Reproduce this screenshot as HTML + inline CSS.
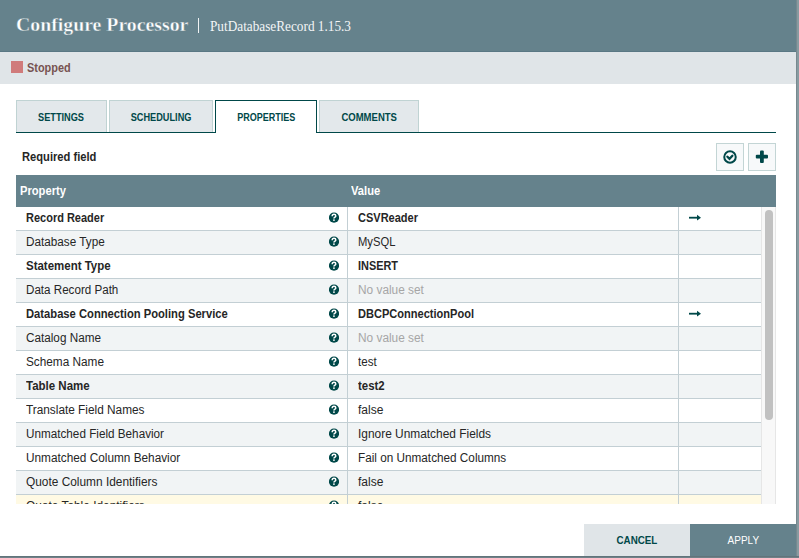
<!DOCTYPE html>
<html><head><meta charset="utf-8">
<style>
*{box-sizing:border-box;margin:0;padding:0}
html,body{width:799px;height:558px;overflow:hidden;background:#889ba1;font-family:"Liberation Sans",sans-serif}
#dlg{position:absolute;left:0;top:0;width:796px;height:556px;background:#fff;overflow:hidden}
#hdr{position:absolute;left:0;top:0;width:796px;height:52px;background:#65828c;border-bottom:1px solid #5a7884}
#ttl{-webkit-text-stroke:0.4px #65828c;position:absolute;left:16px;top:12px;font-family:"Liberation Serif",serif;font-weight:bold;font-size:19.8px;color:#fff;white-space:nowrap;line-height:24px}
#sep{position:absolute;left:198px;top:18px;width:1px;height:15px;background:#f0f3f4}
#sub{position:absolute;left:209.5px;top:19px;font-family:"Liberation Serif",serif;font-size:13.6px;color:#f3f5f6;white-space:nowrap;line-height:16px;transform:scaleX(0.975);transform-origin:0 0}
#status{position:absolute;left:0;top:52px;width:796px;height:32px;background:#e0e5e8}
#sq{position:absolute;left:11px;top:9px;width:12px;height:12px;background:#d07b7b}
#stxt{position:absolute;left:26.5px;top:9px;font-weight:bold;font-size:12px;color:#775351;line-height:14px;white-space:nowrap;transform:scaleX(0.91);transform-origin:0 0}
.tab{position:absolute;top:100px;height:33px;background:#e3e8eb;border:1px solid #c0d3d3;border-bottom:none;color:#004849;font-weight:bold;font-size:10px;line-height:33px;text-align:center;white-space:nowrap}
.tab.sel{background:#fff;border:1px solid #004849;border-bottom:none;height:33px;z-index:2}
.tab span{display:inline-block;transform-origin:center}
#tabline{position:absolute;left:16px;top:132px;width:760px;height:1px;background:#004849;z-index:1}
#req{position:absolute;left:22px;top:150px;font-weight:bold;font-size:12px;color:#262626;line-height:14px;white-space:nowrap;transform:scaleX(0.93);transform-origin:0 0}
.ibtn{position:absolute;top:143px;width:28px;height:28px;background:#f7f9fa;border:1px solid #c3d5d5}
#thead{position:absolute;left:16px;top:175px;width:760px;height:32px;background:#65828c;color:#fff;font-weight:bold;font-size:12px}
#thead div{position:absolute;top:9px;line-height:14px;transform-origin:0 0;transform:scaleX(0.93)}
#grid{position:absolute;left:16px;top:207px;width:760px;height:297px;overflow:hidden}
.row{position:absolute;left:0;width:745px;height:24px;border-bottom:1px solid #c3cfd4;background:#fff}
.row.odd{background:#f1f4f5}
.row.hl{background:#fffae4}
.c1,.c2{position:absolute;top:0;height:23px;line-height:23px;font-size:12px;color:#262626;white-space:nowrap}
.c1{left:10px;transform-origin:0 0}
.c2{left:342px;transform-origin:0 0}
.c1.b,.c2.b{font-weight:bold}
.unset{color:#a6a6a6}
.q{position:absolute;left:313px;top:5px;width:10px;height:11px}
.vl{position:absolute;top:0;width:1px;height:297px;background:#c3cfd4}
.arr{position:absolute;left:673px;top:7px;width:13px;height:8px}
#track{position:absolute;left:745px;top:0;width:15px;height:297px;background:#f8f8f8;border-left:1px solid #e6e6e6;border-right:1px solid #e6e6e6}
#thumb{position:absolute;left:3px;top:3px;width:8px;height:210px;border-radius:4px;background:#c1c1c1}
.fbtn{position:absolute;top:524px;height:32px;width:106px;font-size:11px;line-height:32px;text-align:center;white-space:nowrap}
#cancel{left:584px;background:#e0e5e8;color:#004849;font-weight:bold}
#apply{left:690px;background:#65828c;color:#fff}
</style></head><body>
<div style="position:absolute;left:796px;top:0;width:1px;height:556px;background:#77898f"></div><div style="position:absolute;left:0;top:556px;width:799px;height:1px;background:#62747b"></div><div style="position:absolute;left:0;top:557px;width:799px;height:1px;background:#6f8188"></div>
<div id="dlg">
  <div id="hdr">
    <div id="ttl">Configure Processor</div>
    <div id="sep"></div>
    <div id="sub">PutDatabaseRecord 1.15.3</div>
  </div>
  <div id="status"><div id="sq"></div><div id="stxt">Stopped</div></div>

  <div class="tab" style="left:16px;width:91px"><span style="transform:scaleX(0.92)">SETTINGS</span></div>
  <div class="tab" style="left:109px;width:104px"><span style="transform:scaleX(0.918)">SCHEDULING</span></div>
  <div class="tab sel" style="left:215px;width:102px"><span style="transform:scaleX(0.902)">PROPERTIES</span></div>
  <div class="tab" style="left:319px;width:100px"><span style="transform:scaleX(0.952)">COMMENTS</span></div>
  <div id="tabline"></div>

  <div id="req">Required field</div>
  <div class="ibtn" style="left:716px">
    <svg width="26" height="26" viewBox="0 0 26 26" style="position:absolute;left:0;top:0">
      <circle cx="13" cy="13" r="5.75" fill="none" stroke="#004849" stroke-width="2"/>
      <path d="M10.4 12.7 L12.5 14.9 L15.4 11.8" fill="none" stroke="#004849" stroke-width="2.3" stroke-linecap="round" stroke-linejoin="miter"/>
    </svg>
  </div>
  <div class="ibtn" style="left:748px">
    <svg width="26" height="26" viewBox="0 0 26 26" style="position:absolute;left:0;top:0">
      <rect x="6.8" y="10.7" width="12.2" height="3.8" rx="1" fill="#004849"/><rect x="11" y="6.6" width="3.8" height="12.4" rx="1" fill="#004849"/>
    </svg>
  </div>

  <div id="thead"><div style="left:4px">Property</div><div style="left:335px">Value</div></div>

  <div id="grid">
    <div class="row" style="top:0"><div class="c1 b" style="transform:scaleX(0.916)">Record Reader</div><svg class="q" viewBox="0 0 10 11" width="10" height="11"><circle cx="5" cy="5.6" r="5.1" fill="#004849"/><path d="M3.2 4.2 C3.2 2.8 4.1 2.3 5 2.3 C6 2.3 6.8 2.9 6.8 3.9 C6.8 5.1 4.9 5 4.9 6.5" fill="none" stroke="#fff" stroke-width="1.5"/><rect x="4.15" y="7.4" width="1.6" height="1.5" fill="#fff"/></svg><div class="c2 b" style="transform:scaleX(0.918)">CSVReader</div><svg class="arr" viewBox="0 0 13 8" width="13" height="8"><rect x="0" y="2.8" width="9.5" height="1.8" fill="#004849"/><path d="M8 0.8 L12 3.7 L8 6.6 Z" fill="#004849"/></svg></div>
    <div class="row odd" style="top:24px"><div class="c1" style="transform:scaleX(0.978)">Database Type</div><svg class="q" viewBox="0 0 10 11" width="10" height="11"><circle cx="5" cy="5.6" r="5.1" fill="#004849"/><path d="M3.2 4.2 C3.2 2.8 4.1 2.3 5 2.3 C6 2.3 6.8 2.9 6.8 3.9 C6.8 5.1 4.9 5 4.9 6.5" fill="none" stroke="#fff" stroke-width="1.5"/><rect x="4.15" y="7.4" width="1.6" height="1.5" fill="#fff"/></svg><div class="c2" style="transform:scaleX(0.935)">MySQL</div></div>
    <div class="row" style="top:48px"><div class="c1 b" style="transform:scaleX(0.957)">Statement Type</div><svg class="q" viewBox="0 0 10 11" width="10" height="11"><circle cx="5" cy="5.6" r="5.1" fill="#004849"/><path d="M3.2 4.2 C3.2 2.8 4.1 2.3 5 2.3 C6 2.3 6.8 2.9 6.8 3.9 C6.8 5.1 4.9 5 4.9 6.5" fill="none" stroke="#fff" stroke-width="1.5"/><rect x="4.15" y="7.4" width="1.6" height="1.5" fill="#fff"/></svg><div class="c2 b" style="transform:scaleX(0.909)">INSERT</div></div>
    <div class="row odd" style="top:72px"><div class="c1" style="transform:scaleX(0.968)">Data Record Path</div><svg class="q" viewBox="0 0 10 11" width="10" height="11"><circle cx="5" cy="5.6" r="5.1" fill="#004849"/><path d="M3.2 4.2 C3.2 2.8 4.1 2.3 5 2.3 C6 2.3 6.8 2.9 6.8 3.9 C6.8 5.1 4.9 5 4.9 6.5" fill="none" stroke="#fff" stroke-width="1.5"/><rect x="4.15" y="7.4" width="1.6" height="1.5" fill="#fff"/></svg><div class="c2 unset" style="transform:scaleX(0.988)">No value set</div></div>
    <div class="row" style="top:96px"><div class="c1 b" style="transform:scaleX(0.934)">Database Connection Pooling Service</div><svg class="q" viewBox="0 0 10 11" width="10" height="11"><circle cx="5" cy="5.6" r="5.1" fill="#004849"/><path d="M3.2 4.2 C3.2 2.8 4.1 2.3 5 2.3 C6 2.3 6.8 2.9 6.8 3.9 C6.8 5.1 4.9 5 4.9 6.5" fill="none" stroke="#fff" stroke-width="1.5"/><rect x="4.15" y="7.4" width="1.6" height="1.5" fill="#fff"/></svg><div class="c2 b" style="transform:scaleX(0.921)">DBCPConnectionPool</div><svg class="arr" viewBox="0 0 13 8" width="13" height="8"><rect x="0" y="2.8" width="9.5" height="1.8" fill="#004849"/><path d="M8 0.8 L12 3.7 L8 6.6 Z" fill="#004849"/></svg></div>
    <div class="row odd" style="top:120px"><div class="c1" style="transform:scaleX(0.977)">Catalog Name</div><svg class="q" viewBox="0 0 10 11" width="10" height="11"><circle cx="5" cy="5.6" r="5.1" fill="#004849"/><path d="M3.2 4.2 C3.2 2.8 4.1 2.3 5 2.3 C6 2.3 6.8 2.9 6.8 3.9 C6.8 5.1 4.9 5 4.9 6.5" fill="none" stroke="#fff" stroke-width="1.5"/><rect x="4.15" y="7.4" width="1.6" height="1.5" fill="#fff"/></svg><div class="c2 unset" style="transform:scaleX(0.988)">No value set</div></div>
    <div class="row" style="top:144px"><div class="c1" style="transform:scaleX(0.982)">Schema Name</div><svg class="q" viewBox="0 0 10 11" width="10" height="11"><circle cx="5" cy="5.6" r="5.1" fill="#004849"/><path d="M3.2 4.2 C3.2 2.8 4.1 2.3 5 2.3 C6 2.3 6.8 2.9 6.8 3.9 C6.8 5.1 4.9 5 4.9 6.5" fill="none" stroke="#fff" stroke-width="1.5"/><rect x="4.15" y="7.4" width="1.6" height="1.5" fill="#fff"/></svg><div class="c2" style="transform:scaleX(0.965)">test</div></div>
    <div class="row odd" style="top:168px"><div class="c1 b" style="transform:scaleX(0.958)">Table Name</div><svg class="q" viewBox="0 0 10 11" width="10" height="11"><circle cx="5" cy="5.6" r="5.1" fill="#004849"/><path d="M3.2 4.2 C3.2 2.8 4.1 2.3 5 2.3 C6 2.3 6.8 2.9 6.8 3.9 C6.8 5.1 4.9 5 4.9 6.5" fill="none" stroke="#fff" stroke-width="1.5"/><rect x="4.15" y="7.4" width="1.6" height="1.5" fill="#fff"/></svg><div class="c2 b" style="transform:scaleX(0.95)">test2</div></div>
    <div class="row" style="top:192px"><div class="c1" style="transform:scaleX(0.985)">Translate Field Names</div><svg class="q" viewBox="0 0 10 11" width="10" height="11"><circle cx="5" cy="5.6" r="5.1" fill="#004849"/><path d="M3.2 4.2 C3.2 2.8 4.1 2.3 5 2.3 C6 2.3 6.8 2.9 6.8 3.9 C6.8 5.1 4.9 5 4.9 6.5" fill="none" stroke="#fff" stroke-width="1.5"/><rect x="4.15" y="7.4" width="1.6" height="1.5" fill="#fff"/></svg><div class="c2" style="transform:scaleX(1.0)">false</div></div>
    <div class="row odd" style="top:216px"><div class="c1" style="transform:scaleX(0.976)">Unmatched Field Behavior</div><svg class="q" viewBox="0 0 10 11" width="10" height="11"><circle cx="5" cy="5.6" r="5.1" fill="#004849"/><path d="M3.2 4.2 C3.2 2.8 4.1 2.3 5 2.3 C6 2.3 6.8 2.9 6.8 3.9 C6.8 5.1 4.9 5 4.9 6.5" fill="none" stroke="#fff" stroke-width="1.5"/><rect x="4.15" y="7.4" width="1.6" height="1.5" fill="#fff"/></svg><div class="c2" style="transform:scaleX(0.992)">Ignore Unmatched Fields</div></div>
    <div class="row" style="top:240px"><div class="c1" style="transform:scaleX(0.984)">Unmatched Column Behavior</div><svg class="q" viewBox="0 0 10 11" width="10" height="11"><circle cx="5" cy="5.6" r="5.1" fill="#004849"/><path d="M3.2 4.2 C3.2 2.8 4.1 2.3 5 2.3 C6 2.3 6.8 2.9 6.8 3.9 C6.8 5.1 4.9 5 4.9 6.5" fill="none" stroke="#fff" stroke-width="1.5"/><rect x="4.15" y="7.4" width="1.6" height="1.5" fill="#fff"/></svg><div class="c2" style="transform:scaleX(0.979)">Fail on Unmatched Columns</div></div>
    <div class="row odd" style="top:264px"><div class="c1" style="transform:scaleX(0.99)">Quote Column Identifiers</div><svg class="q" viewBox="0 0 10 11" width="10" height="11"><circle cx="5" cy="5.6" r="5.1" fill="#004849"/><path d="M3.2 4.2 C3.2 2.8 4.1 2.3 5 2.3 C6 2.3 6.8 2.9 6.8 3.9 C6.8 5.1 4.9 5 4.9 6.5" fill="none" stroke="#fff" stroke-width="1.5"/><rect x="4.15" y="7.4" width="1.6" height="1.5" fill="#fff"/></svg><div class="c2" style="transform:scaleX(1.0)">false</div></div>
    <div class="row hl" style="top:288px"><div class="c1" style="transform:scaleX(0.99)">Quote Table Identifiers</div><svg class="q" viewBox="0 0 10 11" width="10" height="11"><circle cx="5" cy="5.6" r="5.1" fill="#004849"/><path d="M3.2 4.2 C3.2 2.8 4.1 2.3 5 2.3 C6 2.3 6.8 2.9 6.8 3.9 C6.8 5.1 4.9 5 4.9 6.5" fill="none" stroke="#fff" stroke-width="1.5"/><rect x="4.15" y="7.4" width="1.6" height="1.5" fill="#fff"/></svg><div class="c2" style="transform:scaleX(1.0)">false</div></div>
    <div class="vl" style="left:331px"></div>
    <div class="vl" style="left:662px"></div>
    <div id="track"><div id="thumb"></div></div>
  </div>

  <div class="fbtn" id="cancel"><span style="display:inline-block;transform:scaleX(0.89)">CANCEL</span></div>
  <div class="fbtn" id="apply"><span style="display:inline-block;transform:scaleX(0.91)">APPLY</span></div>
</div>
</body></html>
